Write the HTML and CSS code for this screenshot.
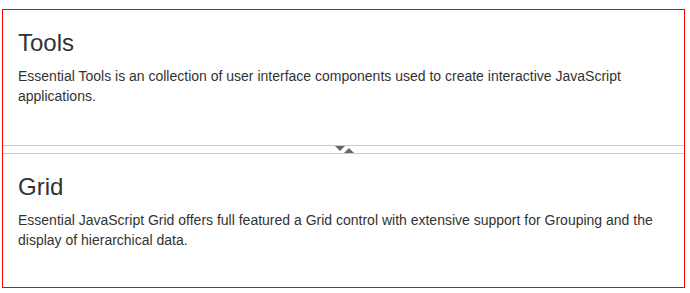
FILE: index.html
```html
<!DOCTYPE html>
<html>
<head>
<meta charset="utf-8">
<link rel="stylesheet" href="styles.css">
</head>
<body>
<div class="splitter">
  <div class="pane pane-top">
    <h3>Tools</h3>
    <p>Essential Tools is an collection of user interface components used to create interactive JavaScript applications.</p>
  </div>
  <div class="bar">
    <span class="arrow arrow-down"></span>
    <span class="arrow arrow-up"></span>
  </div>
  <div class="pane pane-bottom">
    <h3>Grid</h3>
    <p>Essential JavaScript Grid offers full featured a Grid control with extensive support for Grouping and the display of hierarchical data.</p>
  </div>
</div>
</body>
</html>
```

FILE: styles.css
```css
html, body {
  margin: 0;
  padding: 0;
  background: #fff;
}
body {
  font-family: "Liberation Sans", Arial, sans-serif;
  font-size: 14px;
  line-height: 20px;
  color: #333;
}
.splitter {
  margin: 9px 0 0 2px;
  width: 681px;
  height: 277px;
  border: 1px solid #ff0000;
  display: flex;
  flex-direction: column;
}
.pane {
  padding: 0 15px;
  overflow: hidden;
}
.pane-top { height: 135px; }
.pane-bottom { height: 133px; }
h3 {
  margin: 20px 0 10px;
  font-size: 24px;
  font-weight: 500;
  line-height: 1.1;
}
p {
  margin: 0;
}
.bar {
  height: 7px;
  border-top: 1px solid #c8c8c8;
  border-bottom: 1px solid #c8c8c8;
  display: flex;
  justify-content: center;
  padding-left: 1px;
}
.arrow {
  width: 0;
  height: 0;
  border-left: 5px solid transparent;
  border-right: 5px solid transparent;
}
.arrow-down {
  align-self: flex-start;
  border-top: 5px solid #666;
}
.arrow-up {
  align-self: flex-end;
  border-bottom: 5px solid #666;
  margin-left: -1px;
}
```
